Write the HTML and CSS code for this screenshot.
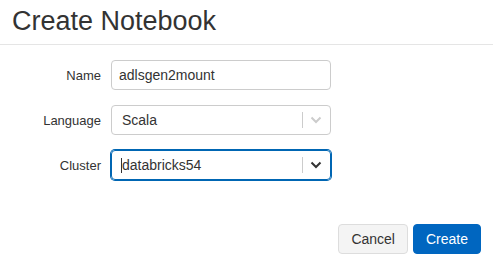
FILE: index.html
```html
<!DOCTYPE html>
<html lang="en">

<head>
  <meta charset="UTF-8" />
  <title>Create Notebook</title>
  <link rel="stylesheet" href="styles.css">
</head>

<body>
  <!-- Dialog header -->
  <div class="modal-header">
    <h1>Create Notebook</h1>
  </div>

  <!-- Form fields -->
  <form class="modal-body">
    <div class="row">
      <label for="nbName">Name</label>
      <input type="text" id="nbName" class="field" value="adlsgen2mount" />
    </div>
    <div class="row">
      <label>Language</label>
      <div class="field select">
        <span class="value">Scala</span>
        <span class="sep"></span>
        <svg class="chevron" width="12" height="8" viewBox="0 0 12 8">
          <path d="M1.5 1.5 L6 6 L10.5 1.5" fill="none" stroke="#ccc" stroke-width="2" />
        </svg>
      </div>
    </div>
    <div class="row">
      <label>Cluster</label>
      <div class="field select focused">
        <span class="value"><span class="caret"></span>databricks54</span>
        <span class="sep"></span>
        <svg class="chevron" width="12" height="8" viewBox="0 0 12 8">
          <path d="M1.5 1.5 L6 6 L10.5 1.5" fill="none" stroke="#333" stroke-width="2" />
        </svg>
      </div>
    </div>
  </form>

  <!-- Footer buttons -->
  <div class="modal-footer">
    <button class="btn">Cancel</button>
    <button class="btn primary">Create</button>
  </div>
</body>

</html>
```

FILE: styles.css
```css
body {
  font-family: "Liberation Sans", Arial, sans-serif;
  margin: 0;
  padding: 0;
  color: #333;
  background-color: #fff;
}

/* Header */
.modal-header {
  height: 44px;
  border-bottom: 1px solid #e5e5e5;
  padding: 0 12px;
}

.modal-header h1 {
  margin: 0;
  font-size: 27px;
  font-weight: normal;
  line-height: 42px;
  color: #333;
}

/* Form */
.modal-body {
  padding-top: 15px;
  margin: 0;
}

.row {
  display: flex;
  align-items: center;
  margin-bottom: 15px;
}

.row label {
  width: 101px;
  text-align: right;
  padding-right: 10px;
  font-size: 13px;
  color: #333;
}

.field {
  box-sizing: border-box;
  width: 220px;
  height: 30px;
  border: 1px solid #ccc;
  border-radius: 4px;
  font-family: "Liberation Sans", Arial, sans-serif;
  font-size: 14px;
  color: #333;
  padding: 0 7px;
  margin: 0;
  outline: none;
}

.select {
  display: flex;
  align-items: center;
  padding: 0 0 0 10px;
}

.select .value {
  flex: 1;
  display: flex;
  align-items: center;
}

.sep {
  width: 1px;
  height: 16px;
  background-color: #ccc;
}

.chevron {
  margin: 0 8px 0 7px;
}

.focused {
  border-color: #0066b3;
  box-shadow: 0 0 0 1px #0066b3;
  padding-left: 9px;
}

.caret {
  display: inline-block;
  width: 1px;
  height: 15px;
  background-color: #333;
}

/* Footer */
.modal-footer {
  display: flex;
  justify-content: flex-end;
  gap: 5px;
  padding: 29px 12px 0 0;
}

.btn {
  height: 30px;
  padding: 0 12px;
  font-family: "Liberation Sans", Arial, sans-serif;
  font-size: 14px;
  border: 1px solid #ddd;
  border-radius: 4px;
  background-color: #f4f4f4;
  color: #333;
}

.btn.primary {
  background-color: #0066c0;
  border-color: #0066c0;
  color: #fff;
}
```
